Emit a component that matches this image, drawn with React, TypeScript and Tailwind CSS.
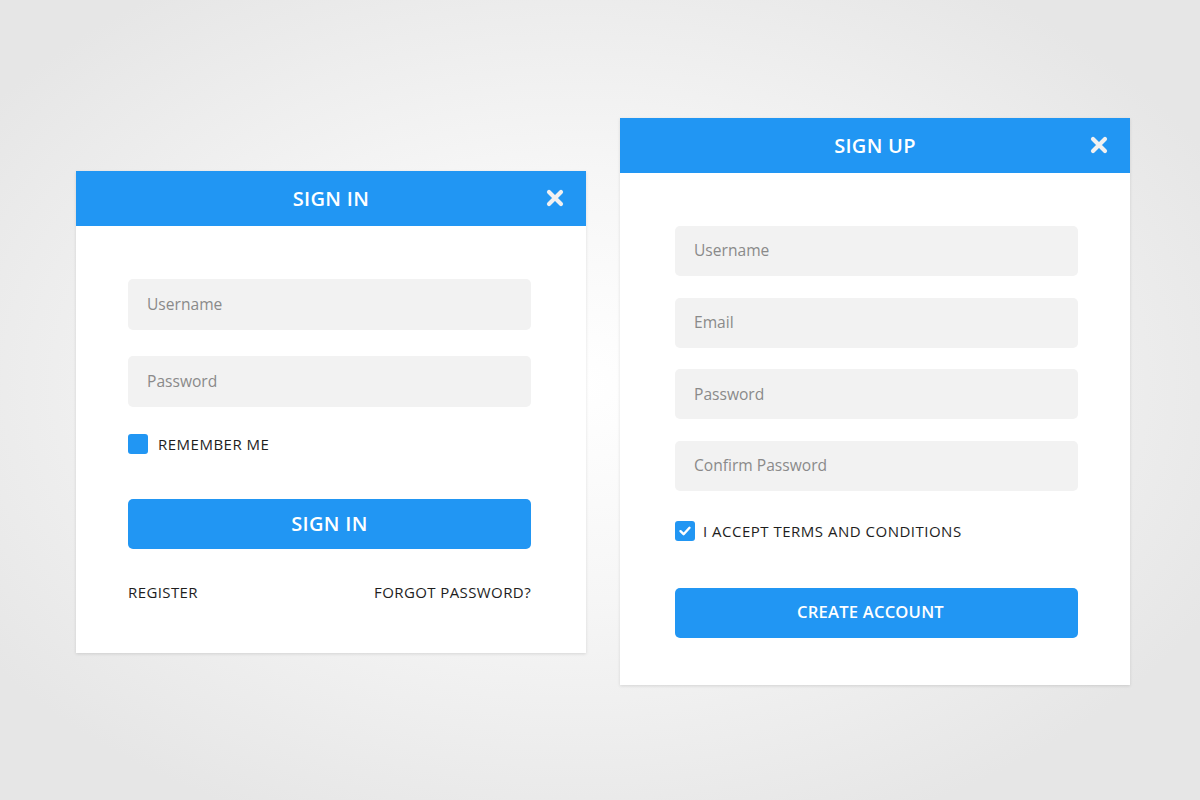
import React from "react";

const font = { fontFamily: '"Open Sans", "Noto Sans", sans-serif' };

function CloseIcon() {
  return (
    <svg width="18" height="18" viewBox="0 0 18 18" className="text-[#f1f1f1]">
      <path d="M3 3 L15 15 M15 3 L3 15" stroke="currentColor" strokeWidth="4.2" strokeLinecap="round" />
    </svg>
  );
}

function Header({ title }: { title: string }) {
  return (
    <div className="relative flex h-[55px] items-center justify-center bg-[#2196f3]">
      <span className="text-[20px] font-semibold tracking-[0.3px] text-white">{title}</span>
      <span className="absolute right-[22px] top-[18px]">
        <CloseIcon />
      </span>
    </div>
  );
}

function Field({ label, h }: { label: string; h: string }) {
  return (
    <div className={`flex w-[403px] items-center rounded-[5px] bg-[#f2f2f2] pl-[19px] text-[15.6px] text-[#8a8a8a] ${h}`}>
      {label}
    </div>
  );
}

export default function App() {
  return (
    <div
      style={font}
      className="flex h-[800px] w-[1200px] items-start gap-[34px] bg-[radial-gradient(ellipse_60%_60%_at_48%_48%,#ffffff_0%,#f6f6f6_45%,#e6e6e6_100%)] pl-[76px] pt-[118px]"
    >
      {/* sign in */}
      <div className="mt-[53px] flex h-[482px] w-[510px] flex-col bg-white shadow-[0_1px_3px_rgba(0,0,0,0.12)]">
        <Header title="SIGN IN" />
        <div className="flex flex-col pl-[52px] pt-[53px]">
          <div className="flex flex-col gap-[26px]">
            <Field label="Username" h="h-[51px]" />
            <Field label="Password" h="h-[51px]" />
          </div>
          <div className="mt-[26px] flex items-center gap-[10px]">
            <span className="h-[20px] w-[20px] rounded-[3px] bg-[#2196f3]" />
            <span className="text-[15px] tracking-[0.5px] text-[#1e1e1e]">REMEMBER ME</span>
          </div>
          <button className="mt-[43px] flex h-[50px] w-[403px] items-center justify-center rounded-[5px] bg-[#2196f3] text-[20px] font-semibold tracking-[0.3px] text-white">
            SIGN IN
          </button>
          <div className="mt-[32px] flex w-[403px] items-center justify-between text-[15px] tracking-[0.4px] text-[#1e1e1e]">
            <span>REGISTER</span>
            <span>FORGOT PASSWORD?</span>
          </div>
        </div>
      </div>

      {/* sign up */}
      <div className="flex h-[567px] w-[510px] flex-col bg-white shadow-[0_1px_3px_rgba(0,0,0,0.12)]">
        <Header title="SIGN UP" />
        <div className="flex flex-col pl-[55px] pt-[53px]">
          <div className="flex flex-col gap-[21.7px]">
            <Field label="Username" h="h-[50px]" />
            <Field label="Email" h="h-[50px]" />
            <Field label="Password" h="h-[50px]" />
            <Field label="Confirm Password" h="h-[50px]" />
          </div>
          <div className="mt-[29px] flex items-center gap-[8px]">
            <span className="flex h-[20px] w-[20px] items-center justify-center rounded-[3px] bg-[#2196f3]">
              <svg width="14" height="14" viewBox="0 0 14 14">
                <path d="M2.5 7.2 L5.6 10.2 L11.5 3.8" fill="none" stroke="white" strokeWidth="2.4" strokeLinecap="round" strokeLinejoin="round" />
              </svg>
            </span>
            <span className="text-[15px] tracking-[0.5px] text-[#1e1e1e]">I ACCEPT TERMS AND CONDITIONS</span>
          </div>
          <button className="mt-[45px] flex h-[50px] w-[403px] items-center justify-center rounded-[5px] bg-[#2196f3] pr-[12px] text-[16.6px] font-semibold tracking-[0.2px] text-white">
            CREATE ACCOUNT
          </button>
        </div>
      </div>
    </div>
  );
}
